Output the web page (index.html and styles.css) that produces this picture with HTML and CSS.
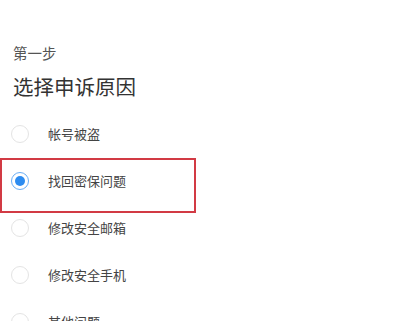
FILE: index.html
```html
<!DOCTYPE html>
<html lang="zh-CN">
<head>
<meta charset="utf-8">
<link rel="stylesheet" href="styles.css">
</head>
<body>
<div class="page">
  <div class="step">第一步</div>
  <div class="title">选择申诉原因</div>
  <ul class="options">
    <li class="option"><span class="radio"></span><span class="label">帐号被盗</span></li>
    <li class="option selected"><span class="radio"></span><span class="label">找回密保问题</span><span class="mark"></span></li>
    <li class="option"><span class="radio"></span><span class="label">修改安全邮箱</span></li>
    <li class="option"><span class="radio"></span><span class="label">修改安全手机</span></li>
    <li class="option"><span class="radio"></span><span class="label">其他问题</span></li>
  </ul>
</div>
</body>
</html>
```

FILE: styles.css
```css
html, body {
  margin: 0;
  padding: 0;
  background: #ffffff;
  overflow: hidden;
}
body {
  font-family: "Noto Sans CJK SC", "Microsoft YaHei", sans-serif;
  color: #333333;
}
.page {
  padding: 44px 0 0 13px;
}
.step {
  font-size: 14.5px;
  line-height: 18px;
  color: #555555;
}
.title {
  margin-top: 10px;
  font-size: 20.5px;
  line-height: 28px;
  color: #333333;
}
.options {
  list-style: none;
  margin: 10px 0 0 0;
  padding: 0;
}
.option {
  position: relative;
  display: flex;
  align-items: center;
  height: 47px;
  margin-left: -2px;
}
.radio {
  position: relative;
  width: 18px;
  height: 18px;
  box-sizing: border-box;
  border: 1px solid #e4e4e4;
  border-radius: 50%;
  flex: none;
}
.selected .radio {
  border-color: #6aaef5;
}
.selected .radio::after {
  content: "";
  position: absolute;
  left: 3px;
  top: 3px;
  width: 10px;
  height: 10px;
  border-radius: 50%;
  background: #2d8cf0;
}
.label {
  margin-left: 19px;
  font-size: 13px;
  color: #444444;
}
.mark {
  position: absolute;
  left: -11px;
  top: 1px;
  width: 196px;
  height: 55px;
  box-sizing: border-box;
  border: 2px solid #d23a44;
}
```
